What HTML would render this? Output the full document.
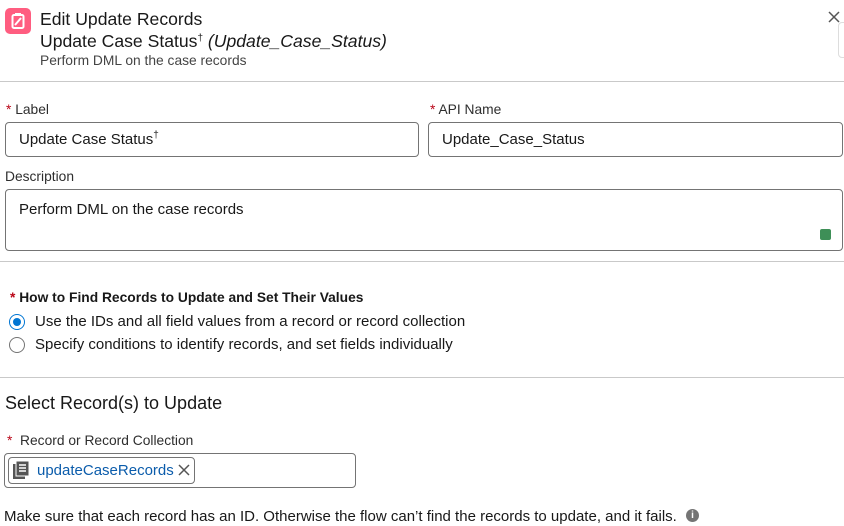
<!DOCTYPE html>
<html><head><style>
body{margin:0;width:844px;height:526px;overflow:hidden;background:#fff;font-family:"Liberation Sans",sans-serif;color:#181818;position:relative}
.a{position:absolute;white-space:nowrap}
.hr{position:absolute;left:0;width:844px;height:1px;background:#c9c9c9}
.box{position:absolute;border:1px solid #747474;border-radius:4px;background:#fff;box-sizing:border-box}
.lab{font-size:13.8px;color:#2e2e2e}
.req{color:#ba0517}
sup{font-size:10px;vertical-align:6px;line-height:0}
</style></head><body>
<div class="a" style="left:5px;top:8px;width:26px;height:26px;border-radius:5px;background:#ff5d80"></div>
<svg class="a" style="left:5px;top:8px" width="26" height="26"><rect x="7.5" y="7" width="11" height="13" rx="1.5" fill="none" stroke="#fff" stroke-width="2"/><rect x="10" y="5" width="6" height="3" fill="#fff"/><path d="M10 17l6-7" stroke="#fff" stroke-width="2"/></svg>
<div class="a" style="left:40px;top:9px;font-size:17.6px">Edit Update Records</div>
<div class="a" style="left:40px;top:31px;font-size:17.6px">Update Case Status<sup>†</sup> <i>(Update_Case_Status)</i></div>
<div class="a" style="left:40px;top:53px;font-size:13.8px;color:#444">Perform DML on the case records</div>
<svg class="a" style="left:828px;top:11px" width="12" height="12"><path d="M1 1l10 10M11 1L1 11" stroke="#555" stroke-width="1.5"/></svg>
<div class="a" style="left:838px;top:22px;width:10px;height:34px;border:1px solid #ddd;border-radius:4px"></div>
<div class="hr" style="top:81px"></div>
<div class="a lab" style="left:6px;top:102px"><span class="req">*</span> Label</div>
<div class="box" style="left:5px;top:122px;width:414px;height:35px"></div>
<div class="a" style="left:19px;top:131px;font-size:15px">Update Case Status<sup>†</sup></div>
<div class="a lab" style="left:430px;top:102px"><span class="req">*</span> API Name</div>
<div class="box" style="left:428px;top:122px;width:415px;height:35px"></div>
<div class="a" style="left:442px;top:131px;font-size:15px">Update_Case_Status</div>
<div class="a lab" style="left:5px;top:169px">Description</div>
<div class="box" style="left:5px;top:189px;width:838px;height:62px"></div>
<div class="a" style="left:19px;top:201px;font-size:15px">Perform DML on the case records</div>
<div class="a" style="left:820px;top:229px;width:11px;height:11px;border-radius:2px;background:#3e8f57"></div>
<div class="hr" style="top:261px"></div>
<div class="a" style="left:10px;top:290px;font-size:13.8px;font-weight:bold"><span class="req">*</span> How to Find Records to Update and Set Their Values</div>
<div class="a" style="left:9px;top:314px;width:16px;height:16px;border:1px solid #0176d3;border-radius:50%;box-sizing:border-box"></div>
<div class="a" style="left:13px;top:318px;width:8px;height:8px;border-radius:50%;background:#0176d3"></div>
<div class="a" style="left:35px;top:313px;font-size:15px">Use the IDs and all field values from a record or record collection</div>
<div class="a" style="left:9px;top:337px;width:16px;height:16px;border:1px solid #747474;border-radius:50%;box-sizing:border-box"></div>
<div class="a" style="left:35px;top:336px;font-size:15px">Specify conditions to identify records, and set fields individually</div>
<div class="hr" style="top:377px"></div>
<div class="a" style="left:5px;top:393px;font-size:18px">Select Record(s) to Update</div>
<div class="a lab" style="left:7px;top:433px"><span class="req">*</span>&nbsp; Record or Record Collection</div>
<div class="box" style="left:4px;top:453px;width:352px;height:35px"></div>
<div class="a" style="left:8px;top:457px;width:187px;height:27px;border:1px solid #747474;border-radius:4px;box-sizing:border-box"></div>
<svg class="a" style="left:11px;top:460px" width="20" height="20"><rect x="2" y="4" width="12" height="15" fill="#555"/><rect x="5" y="1" width="13" height="15" fill="#555" stroke="#fff" stroke-width="1"/><path d="M8 5h7M8 8h7M8 11h7" stroke="#fff" stroke-width="1.5"/></svg>
<div class="a" style="left:37px;top:462px;font-size:15px;color:#0b5cab">updateCaseRecords</div>
<svg class="a" style="left:178px;top:464px" width="12" height="12"><path d="M1 1l10 10M11 1L1 11" stroke="#555" stroke-width="1.5"/></svg>
<div class="a" style="left:4px;top:508px;font-size:15px">Make sure that each record has an ID. Otherwise the flow can’t find the records to update, and it fails.</div>
<div class="a" style="left:686px;top:509px;width:13px;height:13px;border-radius:50%;background:#747474;color:#fff;font-size:10px;font-weight:bold;text-align:center;line-height:13px">i</div>
</body></html>
